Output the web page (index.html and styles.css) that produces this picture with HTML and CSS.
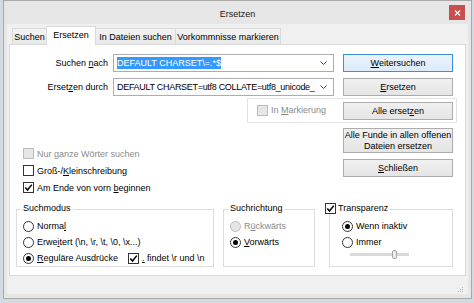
FILE: index.html
```html
<!DOCTYPE html>
<html lang="de">
<head>
  <meta charset="UTF-8" />
  <title>Ersetzen</title>
  <link rel="stylesheet" href="styles.css">
</head>
<body>

  <div class="window">
    <div class="titlebar">
      <span class="title">Ersetzen</span>
      <span class="close">
        <svg width="7" height="6" viewBox="0 0 7 6"><path d="M1 0.5 L6 5.5 M6 0.5 L1 5.5" stroke="#fff" stroke-width="1.3" fill="none"/></svg>
      </span>
    </div>

    <div class="client">
      <div class="tabs">
        <div class="tab tab-search">Suchen</div>
        <div class="tab tab-replace active">Ersetzen</div>
        <div class="tab tab-files">In Dateien suchen</div>
        <div class="tab tab-mark">Vorkommnisse markieren</div>
      </div>

      <div class="panel">
        <div class="row">
          <span class="lbl">Suchen <u>n</u>ach</span>
          <div class="combo">
            <span class="combo-text"><span class="sel">DEFAULT CHARSET\=.*$</span></span>
            <svg class="chev" width="7" height="4" viewBox="0 0 7 4"><path d="M0.5 0.5 L3.5 3.5 L6.5 0.5" stroke="#444" fill="none"/></svg>
          </div>
          <button class="btn btn-default"><u>W</u>eitersuchen</button>
        </div>

        <div class="row row-2">
          <span class="lbl">Erset<u>z</u>en durch</span>
          <div class="combo">
            <span class="combo-text narrow">DEFAULT CHARSET=utf8 COLLATE=utf8_unicode_</span>
            <svg class="chev" width="7" height="4" viewBox="0 0 7 4"><path d="M0.5 0.5 L3.5 3.5 L6.5 0.5" stroke="#444" fill="none"/></svg>
          </div>
          <button class="btn"><u>E</u>rsetzen</button>
        </div>

        <div class="selection-box">
          <div class="opt opt-sel dis">
            <span class="cb"></span>
            <span>In <u>M</u>arkierung</span>
          </div>
          <button class="btn">Alle erset<u>z</u>en</button>
        </div>

        <div class="row-options">
          <div class="options">
            <div class="opt dis"><span class="cb"></span><span>Nur ganze Wörter suchen</span></div>
            <div class="opt"><span class="cb"></span><span>Groß-/<u>K</u>leinschreibung</span></div>
            <div class="opt">
              <span class="cb"><svg width="9" height="9" viewBox="0 0 9 9"><path d="M1.3 4.6 L3.5 7 L7.8 1.6" stroke="#000" stroke-width="1.5" fill="none"/></svg></span>
              <span>Am Ende von vorn <u>b</u>eginnen</span>
            </div>
          </div>
          <div class="side-buttons">
            <button class="btn btn-tall">Alle Funde in allen offenen<br>Dateien ersetzen</button>
            <button class="btn btn-close"><u>S</u>chließen</button>
          </div>
        </div>

        <div class="groups">
          <div class="group group-mode">
            <span class="group-title">Suchmodus</span>
            <div class="group-box">
              <div class="opt"><span class="rb"></span><span>Norma<u>l</u></span></div>
              <div class="opt"><span class="rb"></span><span>Erwe<u>i</u>tert (\n, \r, \t, \0, \x...)</span></div>
              <div class="opt">
                <span class="rb on"></span><span><u>R</u>eguläre Ausdrücke</span>
                <span class="cb cb-dot"><svg width="9" height="9" viewBox="0 0 9 9"><path d="M1.3 4.6 L3.5 7 L7.8 1.6" stroke="#000" stroke-width="1.5" fill="none"/></svg></span>
                <span><u>.</u> findet \r und \n</span>
              </div>
            </div>
          </div>

          <div class="group group-dir">
            <span class="group-title">Suchrichtung</span>
            <div class="group-box">
              <div class="opt dis"><span class="rb"></span><span>R<u>ü</u>ckwärts</span></div>
              <div class="opt"><span class="rb on"></span><span><u>V</u>orwärts</span></div>
            </div>
          </div>

          <div class="group group-trans">
            <span class="group-title title-check">
              <span class="cb"><svg width="9" height="9" viewBox="0 0 9 9"><path d="M1.3 4.6 L3.5 7 L7.8 1.6" stroke="#000" stroke-width="1.5" fill="none"/></svg></span>
              <span>Transparenz</span>
            </span>
            <div class="group-box">
              <div class="opt"><span class="rb on"></span><span>Wenn inaktiv</span></div>
              <div class="opt"><span class="rb"></span><span>Immer</span></div>
              <div class="slider"><span class="thumb"></span></div>
            </div>
          </div>
        </div>
      </div>

      <div class="footer">
        <svg width="7" height="7" viewBox="0 0 7 7" fill="#b4b4b4">
          <rect x="5" y="1" width="1" height="1"/>
          <rect x="3" y="3" width="1" height="1"/><rect x="5" y="3" width="1" height="1"/>
          <rect x="1" y="5" width="1" height="1"/><rect x="3" y="5" width="1" height="1"/><rect x="5" y="5" width="1" height="1"/>
        </svg>
      </div>
    </div>
  </div>

</body>
</html>
```

FILE: styles.css
```css
* {
  box-sizing: border-box;
}
body {
  margin: 0;
  background: #d5dae0;
  font-family: "Liberation Sans", Arial, sans-serif;
  font-size: 9px;
  color: #000;
  overflow: hidden;
}
.window {
  margin-left: 3px;
  width: 469px;
  height: 299px;
  border: 1px solid #a8a8a8;
  background: #e6e6e6;
  padding: 0 3px 4px 3px;
  display: flex;
  flex-direction: column;
}
.titlebar {
  height: 23px;
  display: grid;
  grid-template-columns: 1fr auto 1fr;
  align-items: center;
}
.title {
  grid-column: 2;
  color: #222;
  padding-top: 2px;
}
.close {
  grid-column: 3;
  justify-self: end;
  width: 16px;
  height: 15px;
  margin-right: 3px;
  background: #c94f4f;
  display: flex;
  align-items: center;
  justify-content: center;
}
.client {
  flex: 1;
  background: #f0f0f0;
  padding: 0 2px;
  display: flex;
  flex-direction: column;
}

/* tabs */
.tabs {
  height: 20px;
  display: flex;
  align-items: flex-end;
  padding-left: 3px;
}
.tab {
  height: 16px;
  border: 1px solid #d9d9d9;
  border-bottom: none;
  background: linear-gradient(#f3f3f3, #e8e8e8);
  display: flex;
  align-items: center;
  justify-content: center;
  white-space: nowrap;
}
.tab + .tab {
  margin-left: -1px;
}
.tab.active {
  height: 19px;
  margin-bottom: -1px;
  padding-bottom: 3px;
  background: #fff;
  position: relative;
  z-index: 1;
}
.tab-search { width: 35px; }
.tab-replace { width: 50px; }
.tab-files { width: 81px; }
.tab-mark { width: 106px; }

.panel {
  height: 232px;
  border: 1px solid #d9d9d9;
  background: #fff;
  padding-top: 9px;
}

/* top rows */
.row {
  display: flex;
  align-items: center;
  height: 18px;
}
.row-2 {
  margin-top: 6px;
}
.lbl {
  width: 98px;
  text-align: right;
  white-space: nowrap;
}
.combo {
  width: 221px;
  height: 18px;
  margin-left: 5px;
  border: 1px solid #abadb3;
  background: #fff;
  display: flex;
  align-items: center;
  padding: 0 6px 0 3px;
}
.combo-text {
  flex: 1;
  overflow: hidden;
  white-space: nowrap;
  margin-right: 2px;
}
.narrow {
  letter-spacing: -0.3px;
}
.sel {
  display: inline-block;
  line-height: 12px;
  background: #3399ff;
  color: #fff;
}
.chev {
  flex: none;
}

.btn {
  width: 110px;
  height: 18px;
  margin-left: 9px;
  padding: 0;
  border: 1px solid #acacac;
  background: linear-gradient(#f0f0f0, #e5e5e5);
  font-family: inherit;
  font-size: 9px;
  color: #000;
  line-height: 11px;
}
.btn-default {
  border-color: #3c8fd8;
  background: linear-gradient(#eaf3fc, #dcebfa);
}

.selection-box {
  margin: 2px 0 0 237px;
  width: 210px;
  height: 25px;
  border: 1px solid #e3e3e3;
  padding: 3px 0 0 0;
  display: flex;
  align-items: flex-start;
}
.opt-sel {
  width: 95px;
  height: 18px;
  padding-left: 9px;
}
.selection-box .btn {
  margin-left: 0;
}

/* checkboxes / radios */
.opt {
  display: flex;
  align-items: center;
  height: 16px;
  gap: 3px;
  white-space: nowrap;
}
.cb {
  width: 11px;
  height: 11px;
  border: 1px solid #333;
  background: #fff;
  display: flex;
  align-items: center;
  justify-content: center;
  flex: none;
}
.rb {
  width: 11px;
  height: 11px;
  border: 1px solid #333;
  border-radius: 50%;
  background: #fff;
  display: flex;
  align-items: center;
  justify-content: center;
  flex: none;
}
.rb.on::after {
  content: "";
  width: 5px;
  height: 5px;
  border-radius: 50%;
  background: #000;
}
.dis {
  color: #8a8a8a;
}
.dis .cb,
.dis .rb {
  border-color: #bcbcbc;
  background: #e6e6e6;
}
.cb-dot {
  margin-left: 7px;
}

.row-options {
  display: flex;
}
.options {
  padding: 22px 0 0 13px;
}
.options .opt {
  height: 17px;
}
.side-buttons {
  margin-left: auto;
  margin-right: 12px;
  display: flex;
  flex-direction: column;
}
.side-buttons .btn {
  margin-left: 0;
}
.btn-tall {
  height: 25px;
  margin-top: 5px;
}
.btn-close {
  margin-top: 6px;
}

/* group boxes */
.groups {
  margin-top: 7px;
  display: flex;
  align-items: flex-start;
}
.group {
  line-height: 11px;
}
.group-title {
  display: inline-flex;
  align-items: center;
  vertical-align: top;
  height: 11px;
  margin-left: 5px;
  padding: 0 2px;
  background: #fff;
}
.group-box {
  margin-top: -5px;
  height: 58px;
  border: 1px solid #dcdcdc;
  padding: 8px 0 0 6px;
}
.group-mode {
  margin-left: 6px;
  width: 198px;
}
.group-dir {
  margin-left: 9px;
  width: 92px;
}
.group-trans {
  margin-left: 14px;
  width: 124px;
}
.title-check {
  margin-left: -4px;
  padding: 0 2px 0 0;
  gap: 2px;
}
.group-trans .group-box {
  padding-left: 12px;
}
.slider {
  width: 59px;
  height: 9px;
  margin-left: 8px;
  background: linear-gradient(#d9d9d9, #d9d9d9) center / 100% 3px no-repeat;
  display: flex;
}
.thumb {
  width: 5px;
  height: 9px;
  margin-left: 42px;
  border: 1px solid #a6a6a6;
  border-radius: 2px;
  background: #ececec;
}

.footer {
  flex: 1;
  display: flex;
  justify-content: flex-end;
  align-items: flex-end;
  padding: 0 2px 1px 0;
}
```
